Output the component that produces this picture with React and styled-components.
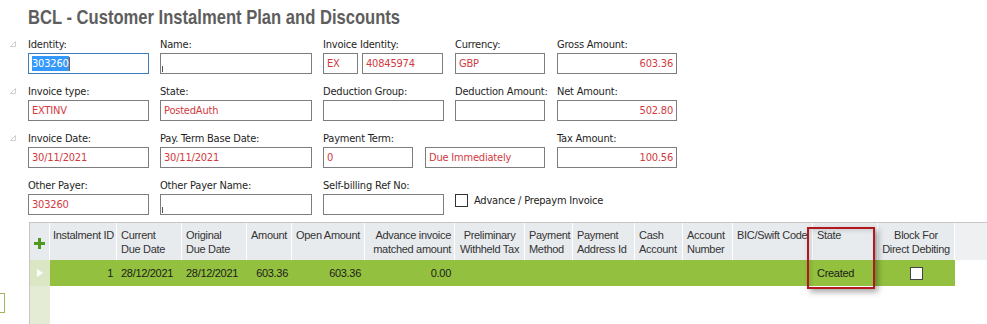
import React from "react";
import styled, { createGlobalStyle } from "styled-components";

const Global = createGlobalStyle`
  html, body { margin: 0; padding: 0; background: #fff; }
  body { width: 987px; height: 324px; overflow: hidden; }
`;

const Page = styled.div`
  width: 987px;
  height: 324px;
  overflow: hidden;
  background: #fff;
  display: flex;
  flex-direction: column;
`;

const TitleBar = styled.div`
  height: 36px;
  box-sizing: border-box;
  padding: 5px 0 0 28px;
`;

const TitleText = styled.h1`
  margin: 0;
  display: inline-block;
  font-family: "Liberation Sans", Arial, sans-serif;
  font-weight: bold;
  font-size: 21px;
  line-height: 24px;
  color: #5e5e5e;
  white-space: nowrap;
  transform: scaleX(0.79);
  transform-origin: left top;
`;

const Form = styled.div`
  display: flex;
  flex-direction: column;
  gap: 9px;
`;

const FormRow = styled.div`
  display: flex;
  height: 38px;
`;

const Gutter = styled.div`
  width: 28px;
  flex: none;
  display: flex;
  align-items: flex-start;
  padding: 5px 0 0 10px;
  box-sizing: border-box;
`;

const Field = styled.div`
  width: ${(p) => p.$w}px;
  flex: none;
  display: flex;
  flex-direction: column;
`;

const Label = styled.div`
  height: 17px;
  font-family: "DejaVu Sans", Tahoma, sans-serif;
  font-stretch: condensed;
  font-size: 11px;
  line-height: 17px;
  color: #1e1e1e;
  white-space: nowrap;
  letter-spacing: -0.2px;
`;

const InputLine = styled.div`
  display: flex;
  align-items: center;
  gap: ${(p) => p.$gap || 0}px;
  height: 21px;
`;

const Input = styled.div`
  position: relative;
  width: ${(p) => p.$w}px;
  height: 21px;
  box-sizing: border-box;
  border: 1px solid ${(p) => (p.$focus ? "#3b7bbf" : "#7d7d7d")};
  padding: 0 3px;
  font-family: "DejaVu Sans", Tahoma, sans-serif;
  font-stretch: condensed;
  font-size: 11px;
  letter-spacing: -0.2px;
  line-height: 19px;
  color: #d23a3f;
  text-align: ${(p) => (p.$right ? "right" : "left")};
  white-space: nowrap;
  overflow: hidden;
  ${(p) =>
    p.$tick &&
    `&::before { content: ""; position: absolute; left: 1px; bottom: 1px; width: 1px; height: 6px; background: #555; }`}
`;

const Selected = styled.span`
  background: #3399ff;
  color: #fff;
  padding: 1px 0;
`;

const Caret = styled.span`
  display: inline-block;
  width: 1px;
  height: 14px;
  background: #8a5a20;
  vertical-align: middle;
`;

const CheckLine = styled.label`
  display: flex;
  align-items: center;
  gap: 6px;
  height: 21px;
  margin-top: -4px;
  font-family: "DejaVu Sans", Tahoma, sans-serif;
  font-stretch: condensed;
  font-size: 11px;
  letter-spacing: -0.2px;
  color: #222;
  white-space: nowrap;
`;

const Box = styled.span`
  width: 13px;
  height: 13px;
  box-sizing: border-box;
  border: 1px solid ${(p) => p.$dark || "#333"};
  background: #fff;
  flex: none;
  display: inline-block;
`;

const GridArea = styled.div`
  flex: 1;
  display: flex;
  margin-top: 7px;
`;

const GridGutter = styled.div`
  width: 29px;
  flex: none;
  display: flex;
  flex-direction: column;
  justify-content: flex-end;
  padding-bottom: 11px;
  box-sizing: border-box;
`;

const SideBox = styled.div`
  width: 4px;
  height: 18px;
  border: 1px solid #9bb95c;
  border-left: none;
`;

const Table = styled.div`
  position: relative;
  flex: 1;
  display: grid;
  grid-template-columns: 20px 67px 65px 65px 45px 73px 90px 70px 48px 62px 48px 50px 80px 65px 77px 1fr;
  grid-template-rows: 37px 26px 1fr;
  border-top: 1px solid #c6c6c6;
  border-left: 1px solid #c6c6c6;
  font-family: "Liberation Sans", Arial, sans-serif;
  font-size: 11px;
  letter-spacing: -0.3px;
`;

const HeadCell = styled.div`
  background: ${(p) => (p.$fill ? "#eef0f2" : "#e8ebee")};
  border-right: ${(p) => (p.$fill ? "none" : "1px solid #fff")};
  box-sizing: border-box;
  padding: 5px ${(p) => (p.$align === "right" ? 3 : 4)}px 0 ${(p) => (p.$tight ? 3 : 4)}px;
  line-height: 14px;
  color: #333;
  text-align: ${(p) => p.$align || "left"};
  white-space: nowrap;
  overflow: hidden;
`;

const AddCell = styled.div`
  background: #e8ebee;
  border-right: 1px solid #fff;
  display: flex;
  align-items: center;
  justify-content: center;
  padding-top: 4px;
  box-sizing: border-box;
`;

const RowHead = styled.div`
  background: #dbe7c4;
  display: flex;
  align-items: center;
  justify-content: center;
`;

const DataCell = styled.div`
  background: ${(p) => (p.$blank ? "#fff" : "#93c13f")};
  padding: 0 4px;
  line-height: 26px;
  color: #1b1b1b;
  text-align: ${(p) => p.$align || "left"};
  white-space: nowrap;
  display: ${(p) => (p.$center ? "flex" : "block")};
  align-items: center;
  justify-content: center;
`;

const FillHead = styled.div`
  background: #e4ecd6;
`;

const FillBody = styled.div`
  grid-column: 2 / -1;
  background: #fff;
`;

const Highlight = styled.div`
  position: absolute;
  left: 777px;
  top: 4px;
  width: 68px;
  height: 62px;
  box-sizing: border-box;
  border: 2px solid #b2191f;
  box-shadow: 3px 3px 6px rgba(0, 0, 0, 0.35), inset 2px 2px 4px rgba(0, 0, 0, 0.12);
  pointer-events: none;
`;

const Tri = () => (
  <svg width="6" height="6" viewBox="0 0 6 6">
    <polygon points="5.5,0.5 5.5,5.5 0.5,5.5" fill="none" stroke="#cfcfcf" strokeWidth="1" />
  </svg>
);

const columns = [
  { l: ["Instalment ID"], tight: true },
  { l: ["Current", "Due Date"] },
  { l: ["Original", "Due Date"] },
  { l: ["Amount"] },
  { l: ["Open Amount"] },
  { l: ["Advance invoice", "matched amount"], align: "right" },
  { l: ["Preliminary", "Withheld Tax"], align: "center" },
  { l: ["Payment", "Method"] },
  { l: ["Payment", "Address Id"] },
  { l: ["Cash", "Account"] },
  { l: ["Account", "Number"] },
  { l: ["BIC/Swift Code"] },
  { l: ["State"] },
  { l: ["Block For", "Direct Debiting"], align: "center" },
];

const row = [
  { v: "1", align: "right" },
  { v: "28/12/2021" },
  { v: "28/12/2021" },
  { v: "603.36", align: "right" },
  { v: "603.36", align: "right" },
  { v: "0.00", align: "right" },
  { v: "" },
  { v: "" },
  { v: "" },
  { v: "" },
  { v: "" },
  { v: "" },
  { v: "Created" },
  { v: "box" },
];

export default function App() {
  return (
    <Page>
      <Global />
      <TitleBar>
        <TitleText>BCL - Customer Instalment Plan and Discounts</TitleText>
      </TitleBar>
      <Form>
        <FormRow>
          <Gutter><Tri /></Gutter>
          <Field $w={132}>
            <Label>Identity:</Label>
            <InputLine>
              <Input $w={121} $focus>
                <Selected>303260</Selected>
                <Caret />
              </Input>
            </InputLine>
          </Field>
          <Field $w={163}>
            <Label>Name:</Label>
            <InputLine><Input $w={152} $tick /></InputLine>
          </Field>
          <Field $w={132}>
            <Label>Invoice Identity:</Label>
            <InputLine $gap={4}>
              <Input $w={35}>EX</Input>
              <Input $w={81}>40845974</Input>
            </InputLine>
          </Field>
          <Field $w={102}>
            <Label>Currency:</Label>
            <InputLine><Input $w={90}>GBP</Input></InputLine>
          </Field>
          <Field $w={130}>
            <Label>Gross Amount:</Label>
            <InputLine><Input $w={120} $right>603.36</Input></InputLine>
          </Field>
        </FormRow>
        <FormRow>
          <Gutter><Tri /></Gutter>
          <Field $w={132}>
            <Label>Invoice type:</Label>
            <InputLine><Input $w={121}>EXTINV</Input></InputLine>
          </Field>
          <Field $w={163}>
            <Label>State:</Label>
            <InputLine><Input $w={152}>PostedAuth</Input></InputLine>
          </Field>
          <Field $w={132}>
            <Label>Deduction Group:</Label>
            <InputLine><Input $w={121} /></InputLine>
          </Field>
          <Field $w={102}>
            <Label>Deduction Amount:</Label>
            <InputLine><Input $w={90} /></InputLine>
          </Field>
          <Field $w={130}>
            <Label>Net Amount:</Label>
            <InputLine><Input $w={120} $right>502.80</Input></InputLine>
          </Field>
        </FormRow>
        <FormRow>
          <Gutter><Tri /></Gutter>
          <Field $w={132}>
            <Label>Invoice Date:</Label>
            <InputLine><Input $w={121}>30/11/2021</Input></InputLine>
          </Field>
          <Field $w={163}>
            <Label>Pay. Term Base Date:</Label>
            <InputLine><Input $w={152}>30/11/2021</Input></InputLine>
          </Field>
          <Field $w={234}>
            <Label>Payment Term:</Label>
            <InputLine $gap={12}>
              <Input $w={90}>0</Input>
              <Input $w={120}>Due Immediately</Input>
            </InputLine>
          </Field>
          <Field $w={130}>
            <Label>Tax Amount:</Label>
            <InputLine><Input $w={120} $right>100.56</Input></InputLine>
          </Field>
        </FormRow>
        <FormRow>
          <Gutter />
          <Field $w={132}>
            <Label>Other Payer:</Label>
            <InputLine><Input $w={121}>303260</Input></InputLine>
          </Field>
          <Field $w={163}>
            <Label>Other Payer Name:</Label>
            <InputLine><Input $w={152} $tick /></InputLine>
          </Field>
          <Field $w={132}>
            <Label>Self-billing Ref No:</Label>
            <InputLine><Input $w={121} /></InputLine>
          </Field>
          <Field $w={200}>
            <Label />
            <CheckLine>
              <Box />
              Advance / Prepaym Invoice
            </CheckLine>
          </Field>
        </FormRow>
      </Form>
      <GridArea>
        <GridGutter><SideBox /></GridGutter>
        <Table>
          <AddCell>
            <svg width="11" height="11" viewBox="0 0 11 11">
              <rect x="4" y="0" width="3" height="11" fill="#4f9a1e" />
              <rect x="0" y="4" width="11" height="3" fill="#4f9a1e" />
            </svg>
          </AddCell>
          {columns.map((c) => (
            <HeadCell key={c.l.join(" ")} $align={c.align} $tight={c.tight}>
              {c.l.map((line, i) => (
                <React.Fragment key={i}>
                  {i > 0 && <br />}
                  {line}
                </React.Fragment>
              ))}
            </HeadCell>
          ))}
          <HeadCell $fill />
          <RowHead>
            <svg width="6" height="8" viewBox="0 0 6 8">
              <polygon points="0,0 6,4 0,8" fill="#fff" />
            </svg>
          </RowHead>
          {row.map((c, i) =>
            c.v === "box" ? (
              <DataCell key={i} $center>
                <Box $dark="#444" />
              </DataCell>
            ) : (
              <DataCell key={i} $align={c.align}>
                {c.v}
              </DataCell>
            )
          )}
          <DataCell $blank />
          <FillHead />
          <FillBody />
          <Highlight />
        </Table>
      </GridArea>
    </Page>
  );
}
